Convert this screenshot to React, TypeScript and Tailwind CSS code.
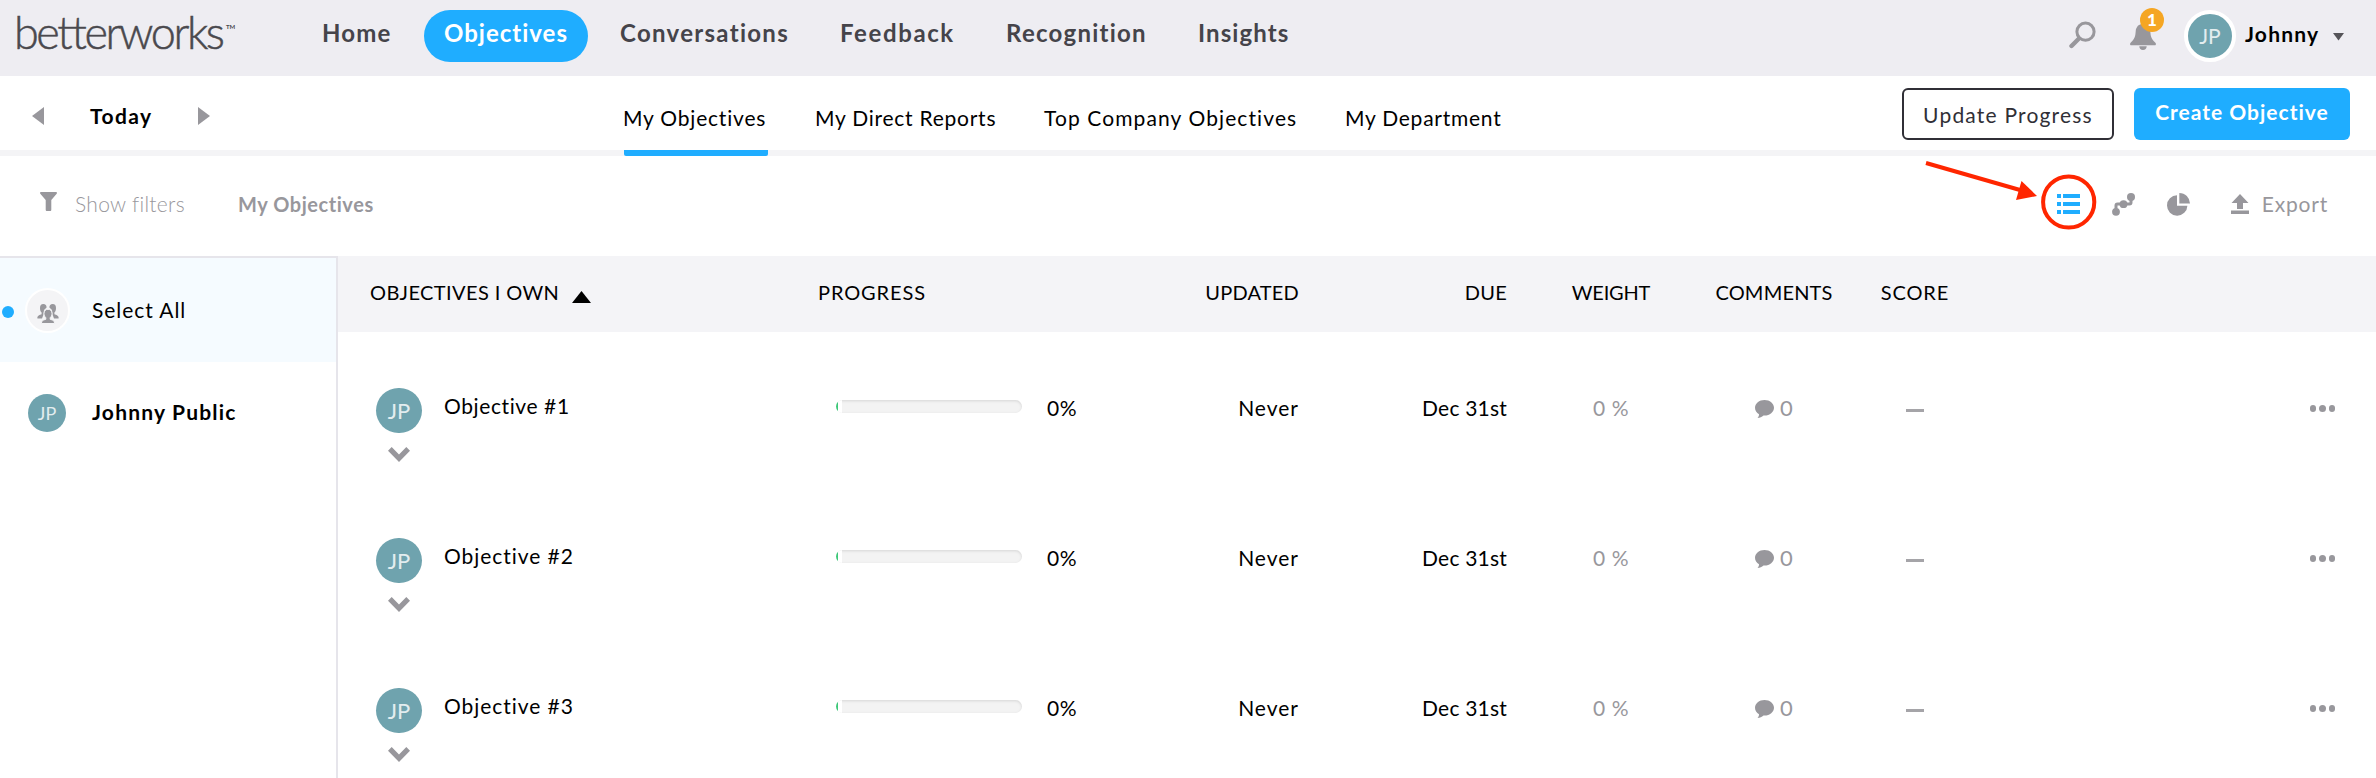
import clsx from 'clsx'

const NAV = [
  { label: 'Home', className: 'w-[110px] tracking-[1.2px]' },
  { label: 'Objectives', className: 'w-[164px] tracking-[1px]', active: true },
  { label: 'Conversations', className: 'w-[208px] tracking-[1.3px]' },
  { label: 'Feedback', className: 'w-[154px] tracking-[1.6px]' },
  { label: 'Recognition', className: 'w-[180px] tracking-[1.25px]' },
  { label: 'Insights', className: 'w-[133px] tracking-[1.1px]' },
]

const TABS = [
  { label: 'My Objectives', className: 'w-[144px] tracking-[0.8px] indent-[-1px]', active: true },
  { label: 'My Direct Reports', className: 'w-[180px] tracking-[0.75px] indent-[-1px]' },
  { label: 'Top Company Objectives', className: 'w-[254px] tracking-[1.1px]' },
  { label: 'My Department', className: 'w-[156px] tracking-[0.75px] indent-[-1px]' },
]

const OBJECTIVES = [
  { id: 1, name: 'Objective #1', nameClass: 'tracking-[0.6px]', progress: 0, updated: 'Never', due: 'Dec 31st', weight: 0, comments: 0 },
  { id: 2, name: 'Objective #2', nameClass: 'tracking-[0.95px]', progress: 0, updated: 'Never', due: 'Dec 31st', weight: 0, comments: 0 },
  { id: 3, name: 'Objective #3', nameClass: 'tracking-[0.95px]', progress: 0, updated: 'Never', due: 'Dec 31st', weight: 0, comments: 0 },
]

const GRID = 'grid grid-cols-[481px_281px_198px_209px_208px_118px_164px_1fr]'

function Logo() {
  return (
    <svg width="224" height="60" viewBox="0 0 224 60" className="shrink-0 overflow-visible" fill="#4a494e">
      <text
        x="0"
        y="45"
        fontSize="45"
        fontWeight="300"
        textLength="211"
        fontFamily="Lato, sans-serif"
        stroke="#4a494e"
        strokeWidth="0.5"
      >
        betterworks
      </text>
      <text x="212" y="25" fontSize="6" fontWeight="700" fontFamily="Lato, sans-serif">TM</text>
    </svg>
  )
}

function Header() {
  return (
    <header className="flex h-[76px] bg-[#eeedf2] text-[#45444a]">
      <div className="w-[302px] pt-1 pl-3.5">
        <Logo />
      </div>
      <nav className="flex gap-3 pt-2.5">
        {NAV.map((item) => (
          <a
            key={item.label}
            className={clsx(
              'h-[52px] rounded-full pl-5 text-[24px] leading-[46px] font-bold whitespace-nowrap',
              item.active && 'bg-[#1fadff] text-white',
              item.className
            )}
          >
            {item.label}
          </a>
        ))}
      </nav>

      <div className="ml-auto flex items-center pr-8 pb-1">
        <svg width="28" height="28" viewBox="0 0 28 28" fill="none" stroke="#98979c" className="mr-[33px] -mt-0.5">
          <circle cx="17.5" cy="10.7" r="8.6" strokeWidth="3" />
          <path d="M11 17.5 3.5 25" strokeWidth="4.4" strokeLinecap="round" />
        </svg>
        <div className="relative mt-0.5 mr-[27px]">
          <svg width="28" height="28" viewBox="0 0 28 28" fill="#98979c">
            <path d="M14 1c-4 0-7 2.600-7.300 7.200C6.400 13.500 5.600 16 1.800 19.400c-1.300 1.300-.9 2.900.9 2.900h22.600c1.800 0 2.200-1.600.9-2.900C22.400 16 21.600 13.500 21.300 8.200 21 3.600 18 1 14 1Z" />
            <path d="M10.300 23.300h7.400c0 2.100-1.500 3.700-3.700 3.700s-3.700-1.600-3.700-3.700Z" />
          </svg>
          <span className="absolute -top-[15px] left-[11px] flex size-6 items-center justify-center rounded-full bg-[#f5a623] text-[17px] font-black text-white">
            1
          </span>
        </div>
        <span className="flex size-[52px] items-center justify-center rounded-full border-4 border-white bg-[#6fa3ae] text-[21px] text-[#e3edef]">
          JP
        </span>
        <span className="mb-1 ml-[9px] w-[88px] text-[21px] font-bold tracking-[1.2px] text-black">Johnny</span>
        <svg width="11" height="8" viewBox="0 0 11 8" className="mt-0.5" fill="#555459">
          <path d="M0 0h11L5.500 7.500Z" />
        </svg>
      </div>
    </header>
  )
}

function SubHeader() {
  return (
    <div className="flex h-20 border-b-[6px] border-[#f4f4f6]">
      <div className="flex h-[74px] w-[624px] items-center pt-1.5 pl-8">
        <svg width="12" height="18" viewBox="0 0 12 18" fill="#98979c">
          <path d="M12 0v18L0 9Z" />
        </svg>
        <span className="ml-[46px] w-[108px] text-[21px] leading-6 font-bold tracking-[1.4px]">Today</span>
        <svg width="12" height="18" viewBox="0 0 12 18" fill="#98979c">
          <path d="M0 0v18l12-9Z" />
        </svg>
      </div>
      <div className="flex gap-12">
        {TABS.map((tab) => (
          <a
            key={tab.label}
            className={clsx(
              '-mb-1.5 h-20 border-b-[6px] pt-[30px] text-[21px] leading-6 whitespace-nowrap',
              tab.active ? 'rounded-b-[2px] border-[#1fadff]' : 'border-transparent',
              tab.className
            )}
          >
            {tab.label}
          </a>
        ))}
      </div>
      <div className="ml-auto flex gap-5 pt-3 pr-[26px]">
        <button className="h-[52px] w-[212px] rounded-md border-2 border-[#302f36] pt-0.5 text-[21px] leading-6 tracking-[1.2px] text-[#302f36]">
          Update Progress
        </button>
        <button className="h-[52px] w-[216px] rounded-md bg-[#1fadff] pb-1 text-[21px] leading-6 font-bold tracking-[1px] text-white">
          Create Objective
        </button>
      </div>
    </div>
  )
}

function Toolbar() {
  return (
    <div className="flex h-[100px] items-center pl-10 text-[21px] text-[#98979c]">
      <div className="flex items-center pb-1">
        <svg width="17" height="19" viewBox="0 0 17 19" className="-mt-1.5" fill="#98979c">
          <path d="M1 0h15c1 0 1.300 1 .7 1.700L11.300 8v9.700c0 .8-.4 1.300-1.200 1.300H7c-.8 0-1.300-.5-1.300-1.300V8L.3 1.700C-.3 1 0 0 1 0Z" />
        </svg>
        <span className="ml-[18px] w-[163px] font-light tracking-[0.3px]">Show filters</span>
        <span className="text-[20px] font-bold tracking-[0.55px]">My Objectives</span>
      </div>

      <div className="ml-auto flex items-center pr-12 pb-1">
        <div className="relative mr-8">
          <svg width="23" height="20" viewBox="0 0 23 20" fill="#1fadff">
            <path d="M0 0h4v4H0ZM6 0h17v4H6ZM0 8h4v4H0ZM6 8h17v4H6ZM0 16h4v4H0ZM6 16h17v4H6Z" />
          </svg>
          {/* callout arrow and ring around the list view toggle */}
          <svg
            width="180"
            height="80"
            viewBox="0 0 180 80"
            className="absolute -top-[38px] -left-[137px] max-w-none"
            fill="none"
            stroke="#ff2600"
            strokeWidth="4"
          >
            <path d="M6 7 100 34" />
            <path d="M101.500 25 96 44l21-4Z" fill="#ff2600" stroke="none" />
            <circle cx="148.700" cy="46" r="25.600" />
          </svg>
        </div>
        <svg width="23" height="23" viewBox="0 0 23 23" className="mr-8" fill="#98979c">
          <path d="M4 19v-6.500q0-1.500 1.500-1.500H17.500q1.500 0 1.500-1.500V4" fill="none" stroke="#98979c" strokeWidth="3" />
          <circle cx="4" cy="18.800" r="3.900" />
          <circle cx="11.500" cy="11.200" r="3.900" />
          <circle cx="19" cy="4" r="4" />
        </svg>
        <svg width="23" height="23" viewBox="0 0 23 23" className="mr-[41px]" fill="#98979c">
          <path d="M10 2.300A10.200 10.200 0 1 0 20.400 12.800H10Z" />
          <path d="M12.300 0v10.600H23A10.700 10.700 0 0 0 12.300 0Z" />
        </svg>
        <svg width="18" height="20" viewBox="0 0 18 20" className="mr-[13px]" fill="#98979c">
          <path d="M9 0 17.500 9H12v6H6V9H.5ZM0 16.600h18V20H0Z" />
        </svg>
        <span className="tracking-[0.8px]">Export</span>
      </div>
    </div>
  )
}

function Sidebar() {
  return (
    <aside className="w-[338px] border-t-2 border-r-2 border-[#e6e5eb] text-[21px] leading-6">
      <div className="flex h-[104px] items-center bg-[#f5fbff] pl-0.5">
        <span className="mt-1 size-3 rounded-full bg-[#1fadff]" />
        <span className="ml-[11px] flex size-[45px] items-center justify-center rounded-full border-2 border-white bg-[#f4f4f6] pt-2">
          <svg width="22" height="20" viewBox="0 0 22 20" fill="#98979c">
            <path d="M6.300 0C8.500 0 9.600 1.500 9.600 3.500L7 6 6.500 10.500 5 14.500H.4C0 12.400 1.200 11.300 4.600 10.300V8.500C3.500 7.500 3 6 3 4 3 1.500 4.100 0 6.300 0Z" />
            <path d="M15.700 0c-2.200 0-3.300 1.500-3.300 3.500L15 6l.5 4.500 1.500 4h4.600c.4-2.100-.8-3.200-4.200-4.200V8.500C18.500 7.500 19 6 19 4c0-2.500-1.100-4-3.300-4Z" />
            <path
              d="M11 5.300c2.600 0 4 1.700 4 4.200 0 1.700-.7 3.300-1.800 4.200v1.600c3.300.8 4.500 1.800 4.300 4.200H4.500c-.2-2.400 1-3.400 4.300-4.200v-1.600C7.700 12.800 7 11.200 7 9.500 7 7 8.400 5.300 11 5.300Z"
              stroke="#f4f4f6"
              strokeWidth="1"
            />
          </svg>
        </span>
        <span className="ml-[22px] tracking-[0.95px]">Select All</span>
      </div>
      <div className="flex h-[102px] items-center pl-7">
        <span className="flex size-[38px] items-center justify-center rounded-full bg-[#6fa3ae] text-[18px] text-[#e3edef]">
          JP
        </span>
        <span className="-mt-0.5 ml-[26px] font-bold tracking-[1.2px]">Johnny Public</span>
      </div>
    </aside>
  )
}

function ObjectiveRow({ objective }: { objective: (typeof OBJECTIVES)[number] }) {
  return (
    <div className={clsx(GRID, 'h-[150px] shrink-0 pt-14 text-[21px] leading-6')}>
      <div className="flex pl-[38px]">
        <div className="flex w-[46px] flex-col items-center">
          <span className="flex h-[45px] w-full items-center justify-center rounded-full bg-[#6fa3ae] text-[22px] text-[#e3edef]">
            JP
          </span>
          <svg width="22" height="15" viewBox="0 0 22 15" className="mt-[14px]" fill="#98979c">
            <path d="M0 3.800 3.700 0 11 7.400 18.300 0 22 3.800 11 15Z" />
          </svg>
        </div>
        <span className={clsx('pt-1.5 pl-[22px] whitespace-nowrap', objective.nameClass)}>{objective.name}</span>
      </div>
      <div className="flex items-start pt-2 pl-[17px]">
        <div className="mt-1 flex h-[13px] w-[186px] overflow-hidden rounded-full bg-[#f3f3f3] shadow-[inset_0_1px_3px_rgba(0,0,0,0.12)]">
          <span className="h-full w-1.5 border-l-2 border-[#3dc878] bg-white" />
        </div>
        <span className="pl-[25px] tracking-[0.5px]">{objective.progress}%</span>
      </div>
      <span className="-mr-px pt-2 text-right tracking-[1px]">{objective.updated}</span>
      <span className="pt-2 text-right tracking-[0.2px]">{objective.due}</span>
      <span className="pt-2 text-center tracking-[0.6px] text-[#98979c]">{objective.weight} %</span>
      <div className="flex items-start justify-center gap-1.5 pt-2 text-[#98979c]">
        <svg width="19" height="18" viewBox="0 0 19 18" className="mt-1" fill="#98979c">
          <path d="M9.500 0C14.800 0 19 3.500 19 7.800s-4.200 7.800-9.500 7.800h-1C6.800 17.300 5 17.900 2.500 18c1-1 1.500-2 1.500-3.700C1.600 12.900 0 10.500 0 7.800 0 3.500 4.200 0 9.500 0Z" />
        </svg>
        <span className="text-[22px]">{objective.comments}</span>
      </div>
      <span className="mt-[21px] ml-[73px] h-[3px] w-[18px] bg-[#a5a4a8]" />
      <div className="flex justify-end gap-[3px] pt-[17px] pr-[41px]">
        <span className="size-[6.5px] rounded-full bg-[#98979c]" />
        <span className="size-[6.5px] rounded-full bg-[#98979c]" />
        <span className="size-[6.5px] rounded-full bg-[#98979c]" />
      </div>
    </div>
  )
}

function ObjectivesTable() {
  return (
    <main className="flex flex-1 flex-col">
      <div className={clsx(GRID, 'h-[76px] shrink-0 bg-[#f4f4f7] pt-6 text-[20px] leading-6')}>
        <div className="flex items-start pl-8">
          <span className="tracking-[0.4px]">OBJECTIVES I OWN</span>
          <svg width="19" height="12" viewBox="0 0 19 12" className="mt-[11px] ml-[13px]">
            <path d="M9.500 0 19 12H0Z" />
          </svg>
        </div>
        <span className="-ml-px tracking-[0.9px]">PROGRESS</span>
        <span className="-mr-px text-right tracking-[0.2px]">UPDATED</span>
        <span className="text-right tracking-[0.3px]">DUE</span>
        <span className="text-center tracking-[-0.2px]">WEIGHT</span>
        <span className="text-center tracking-[0.2px]">COMMENTS</span>
        <span className="text-center tracking-[0.9px]">SCORE</span>
      </div>
      {OBJECTIVES.map((objective) => (
        <ObjectiveRow key={objective.id} objective={objective} />
      ))}
    </main>
  )
}

export default function App() {
  return (
    <div className="flex h-[778px] w-[2376px] flex-col overflow-hidden bg-white font-[Lato,sans-serif] text-black">
      <Header />
      <SubHeader />
      <Toolbar />
      <div className="flex min-h-0 flex-1">
        <Sidebar />
        <ObjectivesTable />
      </div>
    </div>
  )
}
